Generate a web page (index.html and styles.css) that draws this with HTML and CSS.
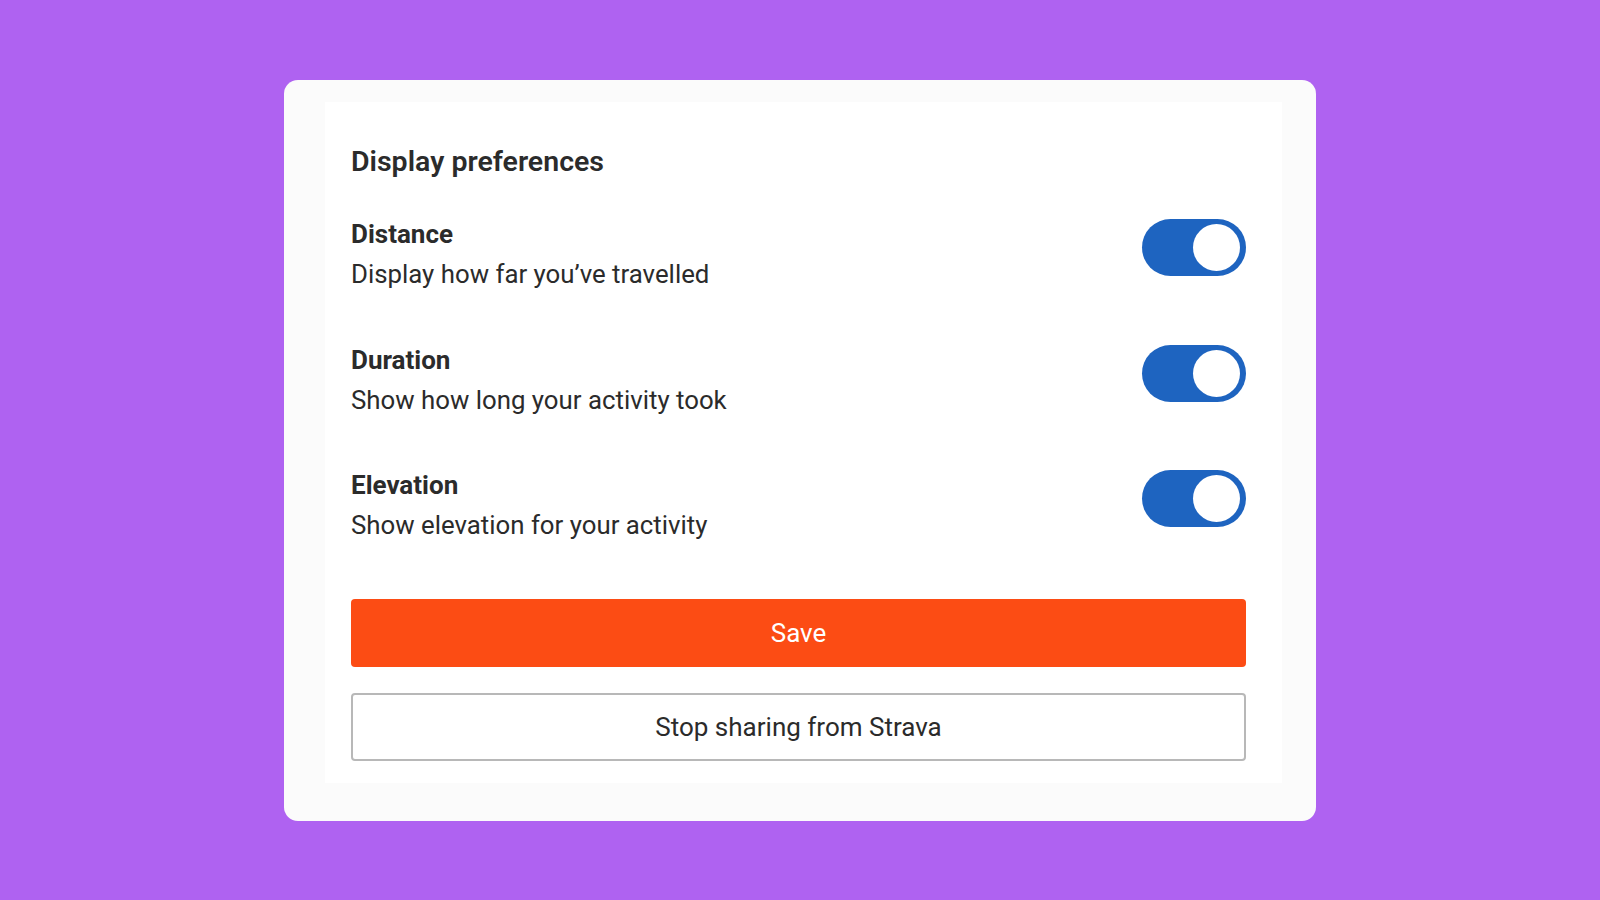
FILE: index.html
```html
<!DOCTYPE html>
<html lang="en">
<head>
  <meta charset="UTF-8">
  <meta name="viewport" content="width=device-width, initial-scale=1.0">
  <title>Display preferences</title>
  <link rel="stylesheet" href="styles.css">
</head>
<body>
  <div class="card">
    <div class="panel">
      <h1>Display preferences</h1>

      <div class="pref">
        <div class="pref-text">
          <div class="pref-label">Distance</div>
          <div class="pref-desc">Display how far you’ve travelled</div>
        </div>
        <div class="toggle"><span class="knob"></span></div>
      </div>

      <div class="pref">
        <div class="pref-text">
          <div class="pref-label">Duration</div>
          <div class="pref-desc">Show how long your activity took</div>
        </div>
        <div class="toggle"><span class="knob"></span></div>
      </div>

      <div class="pref">
        <div class="pref-text">
          <div class="pref-label">Elevation</div>
          <div class="pref-desc">Show elevation for your activity</div>
        </div>
        <div class="toggle"><span class="knob"></span></div>
      </div>

      <button class="btn btn-save">Save</button>
      <button class="btn btn-stop">Stop sharing from Strava</button>
    </div>
  </div>
</body>
</html>
```

FILE: styles.css
```css
body {
  margin: 0;
  height: 900px;
  background: #af62f1;
  font-family: Roboto, "Liberation Sans", sans-serif;
  color: #2b2b2b;
  overflow: hidden;
}
.card {
  width: 1032px;
  box-sizing: border-box;
  margin: 80px auto 0;
  padding: 22px 34px 38px 41px;
  background: #fbfbfb;
  border-radius: 14px;
}
.panel {
  background: #fff;
  padding: 43px 36px 22px 26px;
}
h1 {
  margin: 0;
  font-size: 28.5px;
  line-height: 34px;
  font-weight: 600;
}
.pref {
  display: flex;
  justify-content: space-between;
  align-items: flex-start;
  margin-top: 39px;
}
.pref + .pref {
  margin-top: 53.5px;
}
.pref-label {
  font-size: 26px;
  line-height: 32px;
  font-weight: 700;
}
.pref-desc {
  margin-top: 8px;
  font-size: 25.8px;
  line-height: 32px;
}
.toggle {
  display: flex;
  justify-content: flex-end;
  align-items: center;
  width: 104px;
  height: 57px;
  box-sizing: border-box;
  padding: 0 6px;
  margin-top: 1px;
  border-radius: 29px;
  background: #1e64c0;
}
.knob {
  width: 47px;
  height: 47px;
  border-radius: 50%;
  background: #fff;
}
.btn {
  display: block;
  width: 100%;
  height: 68px;
  font-family: inherit;
  font-size: 26px;
  border-radius: 4px;
}
.btn-save {
  margin-top: 58px;
  border: none;
  background: #fc4c14;
  color: #fff;
}
.btn-stop {
  margin-top: 26px;
  border: 2px solid #b8b8b8;
  background: #fff;
  color: #2b2b2b;
}
```
